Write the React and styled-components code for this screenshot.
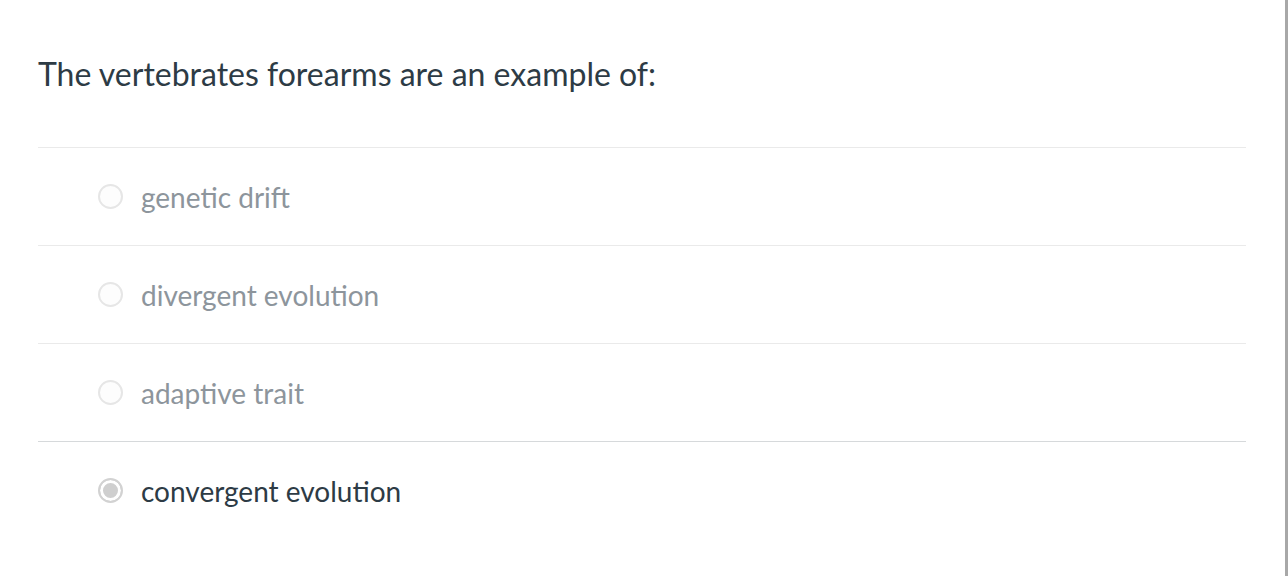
import React from 'react';
import styled, { createGlobalStyle } from 'styled-components';

const GlobalStyle = createGlobalStyle`
  html, body {
    margin: 0;
    padding: 0;
    background: #fff;
  }
  body {
    font-family: Lato, "Open Sans", "Liberation Sans", sans-serif;
  }
`;

const answers = [
  { text: 'genetic drift', checked: false },
  { text: 'divergent evolution', checked: false },
  { text: 'adaptive trait', checked: false },
  { text: 'convergent evolution', checked: true },
];

const Page = styled.div`
  display: flex;
  height: 576px;
  overflow: hidden;
`;

const Question = styled.div`
  flex: 1;
  padding: 0 39px 0 38px;
`;

const ScrollEdge = styled.div`
  width: 3px;
  background: #a8a8a8;
`;

const Title = styled.h2`
  margin: 0;
  height: 147px;
  display: flex;
  align-items: center;
  font-size: 32px;
  font-weight: 400;
  color: #2d3b45;
  line-height: 1;
`;

const Row = styled.label`
  display: flex;
  align-items: center;
  height: 97px;
  border-top: 1px solid ${p => (p.$dark ? '#d6d9db' : '#eaeaea')};
  padding-left: 60px;
  gap: 18px;
`;

const Radio = styled.span`
  box-sizing: border-box;
  width: 25px;
  height: 25px;
  border-radius: 50%;
  border: 2px solid ${p => (p.$checked ? '#d2d2d2' : '#e6e6e6')};
  background: ${p => (p.$checked ? '#cfcfcf' : '#fdfdfd')};
  box-shadow: ${p => (p.$checked ? 'inset 0 0 0 3px #fff' : 'none')};
  flex-shrink: 0;
`;

const AnswerText = styled.span`
  font-size: 28px;
  color: ${p => (p.$checked ? '#2d3b45' : '#8d959c')};
`;

export default function App() {
  return (
    <>
      <GlobalStyle />
      <Page>
        <Question>
          <Title>The vertebrates forearms are an example of:</Title>
          {answers.map((a, i) => (
            <Row key={i} $dark={a.checked}>
              <Radio $checked={a.checked} />
              <AnswerText $checked={a.checked}>{a.text}</AnswerText>
            </Row>
          ))}
        </Question>
        <ScrollEdge />
      </Page>
    </>
  );
}
